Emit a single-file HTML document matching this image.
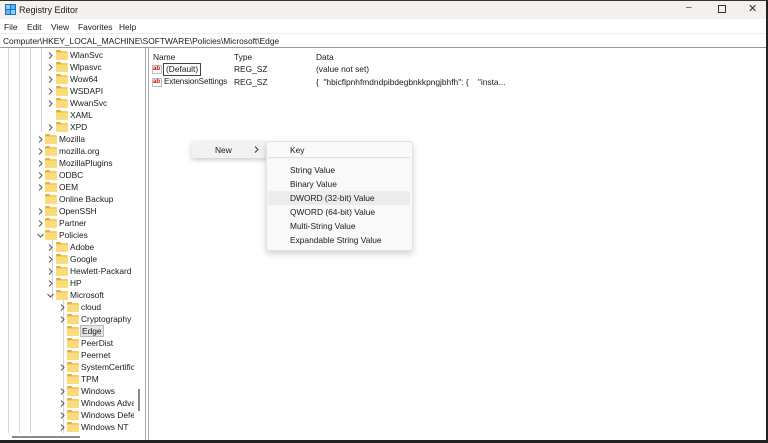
<!DOCTYPE html>
<html><head><style>
*{margin:0;padding:0;box-sizing:border-box}
body{width:768px;height:443px;overflow:hidden;background:#fff;font-family:"Liberation Sans",sans-serif;font-size:8.4px;color:#1a1a1a;position:relative}
.a{position:absolute;white-space:nowrap}
.tb{left:0;top:0;width:768px;height:19px;background:#f6f0ec;border-top:1px solid #333}
.row{position:absolute;height:12px;line-height:12px;white-space:nowrap}
.fold{position:absolute;width:12px;height:9px;top:2px;background:#f6cd5a;border-radius:1px}
.fold:before{content:"";position:absolute;left:0;top:-1px;width:5px;height:2px;background:#e0b13e;border-radius:1px 1px 0 0}
.fold:after{content:"";position:absolute;left:0;top:2px;width:12px;height:7px;background:#fbdc7d}
.chev{position:absolute}
.vl{position:absolute;width:1px;background:#d4d4d4;top:48px;height:385px}
.mi{position:absolute;left:290px;line-height:14px;height:14px}
</style></head><body>
<div class="a tb"></div>
<svg class="a" style="left:5px;top:4px" width="11" height="11"><rect x="0" y="0" width="11" height="11" fill="#1c6fc4"/><rect x="1" y="1" width="4" height="4" fill="#8fd0f5"/><rect x="6" y="1" width="4" height="4" fill="#5fb3ec"/><rect x="1" y="6" width="4" height="4" fill="#5fb3ec"/><rect x="6" y="6" width="4" height="4" fill="#8fd0f5"/></svg>
<div class="a" style="left:19px;top:5px;font-size:9px">Registry Editor</div>
<div class="a" style="left:686px;top:2px;font-size:10px;color:#333">–</div>
<div class="a" style="left:718px;top:5px;width:8px;height:8px;border:1px solid #333"></div>
<div class="a" style="left:748px;top:2px;font-size:11px;color:#333">✕</div>
<div class="a" style="left:4px;top:22px">File</div>
<div class="a" style="left:27px;top:22px">Edit</div>
<div class="a" style="left:51px;top:22px">View</div>
<div class="a" style="left:78px;top:22px">Favorites</div>
<div class="a" style="left:119px;top:22px">Help</div>
<div class="a" style="left:0;top:33px;width:766px;height:1px;background:#eee"></div>
<div class="a" style="left:3px;top:36px">Computer\HKEY_LOCAL_MACHINE\SOFTWARE\Policies\Microsoft\Edge</div>
<div class="a" style="left:0;top:47px;width:766px;height:1px;background:#999"></div>
<div class="a" style="left:766px;top:0;width:2px;height:443px;background:#222"></div>
<div class="a" style="left:0;top:440px;width:768px;height:3px;background:#222"></div>
<div class="a" style="left:145px;top:48px;width:1px;height:392px;background:#aaa"></div>
<div class="a" style="left:148px;top:48px;width:1px;height:392px;background:#aaa"></div>
<div class="vl" style="left:8px"></div><div class="vl" style="left:19px"></div><div class="vl" style="left:30px"></div>
<div class="a" style="left:41px;top:48px;width:1px;height:84px;background:#d4d4d4"></div>
<div class="a" style="left:52px;top:240px;width:1px;height:60px;background:#d4d4d4"></div>
<div class="a" style="left:63px;top:300px;width:1px;height:133px;background:#d4d4d4"></div>
<div class="a" style="left:138px;top:389px;width:2px;height:22px;background:#888"></div>
<div class="a" style="left:12px;top:436px;width:68px;height:2px;background:#888"></div>
<div id="tree"></div>
<script>
var L={A:[40,45,59],B:[50,56,70],C:[62,67,81]};
var items=[["B","WlanSvc",">"],["B","Wlpasvc",">"],["B","Wow64",">"],["B","WSDAPI",">"],["B","WwanSvc",">"],["B","XAML",""],["B","XPD",">"],
["A","Mozilla",">"],["A","mozilla.org",">"],["A","MozillaPlugins",">"],["A","ODBC",">"],["A","OEM",">"],["A","Online Backup",""],["A","OpenSSH",">"],["A","Partner",">"],["A","Policies","v"],
["B","Adobe",">"],["B","Google",">"],["B","Hewlett-Packard",">"],["B","HP",">"],["B","Microsoft","v"],
["C","cloud",">"],["C","Cryptography",">"],["C","Edge","s"],["C","PeerDist",""],["C","Peernet",""],["C","SystemCertifica",">"],["C","TPM",""],["C","Windows",">"],["C","Windows Adva",">"],["C","Windows Defe",">"],["C","Windows NT",">"]];
var h="";items.forEach(function(it,i){var l=L[it[0]],t=49+12*i;
if(it[2]==">")h+='<svg class="chev" style="left:'+(l[0]-2)+'px;top:'+(t+3)+'px" width="5" height="7"><path d="M1 0.5L4 3.5L1 6.5" fill="none" stroke="#555" stroke-width="1"/></svg>';
if(it[2]=="v")h+='<svg class="chev" style="left:'+(l[0]-3)+'px;top:'+(t+4)+'px" width="7" height="5"><path d="M0.5 1L3.5 4L6.5 1" fill="none" stroke="#555" stroke-width="1"/></svg>';
h+='<div class="fold" style="left:'+l[1]+'px;top:'+(t+2)+'px"></div>';
if(it[2]=="s")h+='<div class="row" style="left:'+(l[2]-1)+'px;top:'+t+'px;background:#e5e5e5;border:1px solid #bbb;padding:0 1px;line-height:10px;height:12px">'+it[1]+'</div>';
else h+='<div class="row" style="left:'+l[2]+'px;top:'+t+'px;width:'+(134-l[2])+'px;overflow:hidden">'+it[1]+'</div>';});
document.getElementById("tree").innerHTML=h;
</script>
<div class="a" style="left:153px;top:52px">Name</div>
<div class="a" style="left:234px;top:52px">Type</div>
<div class="a" style="left:316px;top:52px">Data</div>
<div class="a" style="left:152px;top:65px;width:10px;height:9px;border:1px solid #bbb;color:#c00;font-size:6px;line-height:7px;font-weight:bold">ab</div>
<div class="a" style="left:163px;top:63px;border:1px solid #444;padding:0 2px;line-height:11px">(Default)</div>
<div class="a" style="left:234px;top:64px">REG_SZ</div>
<div class="a" style="left:316px;top:64px">(value not set)</div>
<div class="a" style="left:152px;top:78px;width:10px;height:9px;border:1px solid #bbb;color:#c00;font-size:6px;line-height:7px;font-weight:bold">ab</div>
<div class="a" style="left:164px;top:77px;font-size:8.1px;letter-spacing:-0.1px">ExtensionSettings</div>
<div class="a" style="left:234px;top:77px">REG_SZ</div>
<div class="a" style="left:316px;top:77px">{&nbsp;&nbsp;"hbicflpnhfmdndpibdegbnkkpngjbhfh": {&nbsp;&nbsp;&nbsp;&nbsp;"insta...</div>
<div class="a" style="left:191px;top:141px;width:78px;height:17px;background:#f2f2f2;border-radius:3px;box-shadow:0 2px 5px rgba(0,0,0,.2)"></div>
<div class="a" style="left:215px;top:145px">New</div>
<svg class="a" style="left:254px;top:146px" width="5" height="7"><path d="M1 0.5L4 3.5L1 6.5" fill="none" stroke="#333" stroke-width="1"/></svg>
<div class="a" style="left:266px;top:141px;width:147px;height:110px;background:#f9f9f9;border:1px solid #e2e2e2;border-radius:3px;box-shadow:0 3px 7px rgba(0,0,0,.18)"></div>
<div class="a" style="left:268px;top:157px;width:142px;height:1px;background:#ddd"></div>
<div class="a" style="left:268px;top:191px;width:142px;height:14px;background:#ececec;border-radius:2px"></div>
<div class="mi" style="top:143px">Key</div>
<div class="mi" style="top:163px">String Value</div>
<div class="mi" style="top:177px">Binary Value</div>
<div class="mi" style="top:191px">DWORD (32-bit) Value</div>
<div class="mi" style="top:205px">QWORD (64-bit) Value</div>
<div class="mi" style="top:219px">Multi-String Value</div>
<div class="mi" style="top:233px">Expandable String Value</div>
</body></html>
